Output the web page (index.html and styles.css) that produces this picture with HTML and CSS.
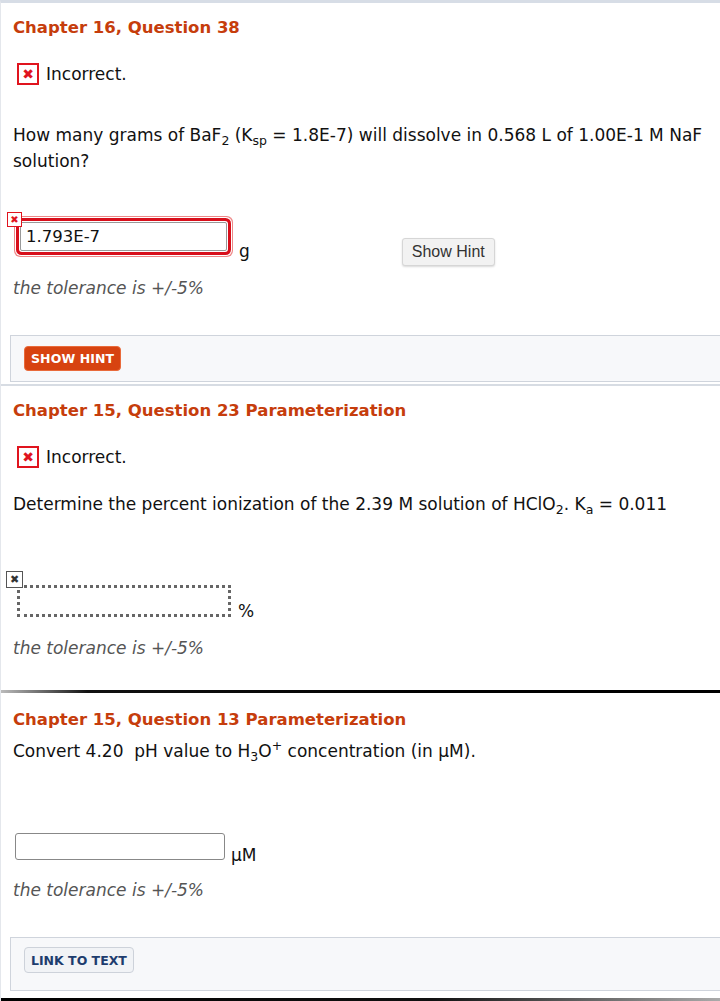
FILE: index.html
```html
<!DOCTYPE html>
<html>
<head>
<meta charset="utf-8">
<link rel="stylesheet" href="styles.css">
</head>
<body>
<div class="page">
  <section class="q q1">
    <h2 class="title">Chapter 16, Question 38</h2>
    <div class="status"><span class="xbox">&#x2716;</span>Incorrect.</div>
    <p class="text">How many grams of BaF<sub>2</sub> (K<sub>sp</sub> = 1.8E-7) will dissolve in 0.568 L of 1.00E-1 M NaF solution?</p>
    <div class="answer-row">
      <div class="field wrong">
        <span class="mark red">&#x2716;</span>
        <div class="input red-input">1.793E-7</div>
      </div>
      <span class="unit">g</span>
      <button class="native-btn">Show Hint</button>
    </div>
    <p class="tol">the tolerance is +/-5%</p>
    <div class="toolbar"><button class="hint-btn">SHOW HINT</button></div>
  </section>
  <div class="sep light"></div>
  <section class="q q2">
    <h2 class="title">Chapter 15, Question 23 Parameterization</h2>
    <div class="status"><span class="xbox">&#x2716;</span>Incorrect.</div>
    <p class="text">Determine the percent ionization of the 2.39 M solution of HClO<sub>2</sub>. K<sub>a</sub> = 0.011</p>
    <div class="answer-row r2">
      <div class="field">
        <span class="mark grey">&#x2716;</span>
        <div class="input dotted"></div>
      </div>
      <span class="unit">%</span>
    </div>
    <p class="tol">the tolerance is +/-5%</p>
  </section>
  <div class="sep dark"></div>
  <section class="q q3">
    <h2 class="title">Chapter 15, Question 13 Parameterization</h2>
    <p class="text t3">Convert 4.20&nbsp; pH value to H<sub>3</sub>O<sup>+</sup> concentration (in μM).</p>
    <div class="answer-row r3">
      <div class="input plain"></div>
      <span class="unit">μM</span>
    </div>
    <p class="tol">the tolerance is +/-5%</p>
    <div class="toolbar tb3"><button class="link-btn">LINK TO TEXT</button></div>
  </section>
  <div class="sep dark bottom"></div>
</div>
</body>
</html>
```
FILE: styles.css
```css
html, body {
  margin: 0;
  padding: 0;
  background: #fff;
}
body {
  font-family: "DejaVu Sans", Verdana, sans-serif;
  font-size: 17px;
  color: #111;
  width: 720px;
  overflow: hidden;
}
.page {
  border-top: 3px solid #d7dde6;
  border-left: 1px solid #e4e7ec;
}
.q {
  padding-left: 12px;
}
.title {
  margin: 0;
  font-size: 16.5px;
  font-weight: bold;
  color: #c63d0c;
  line-height: 20px;
}
.q1 .title { padding-top: 15px; }
.status {
  display: flex;
  align-items: center;
  margin-top: 25px;
  padding-left: 4px;
  line-height: 22px;
}
.xbox {
  display: inline-flex;
  width: 18px;
  height: 18px;
  border: 2px solid #e0141e;
  color: #e0141e;
  font-size: 14px;
  align-items: center;
  justify-content: center;
  margin-right: 7px;
  box-sizing: content-box;
}
.text {
  margin: 37px 0 0 0;
  line-height: 26px;
  padding-right: 6px;
}
sub, sup {
  font-size: 12.5px;
  line-height: 0;
}
sub { vertical-align: -4px; }
sup { vertical-align: 7px; }
.answer-row {
  display: flex;
  align-items: flex-end;
  margin-top: 44px;
}
.field {
  position: relative;
  margin-left: -5px;
}
.mark {
  position: absolute;
  left: -1px;
  top: -6px;
  width: 13px;
  height: 13px;
  font-size: 10px;
  display: flex;
  align-items: center;
  justify-content: center;
  background: #fff;
  z-index: 2;
}
.mark.red {
  border: 1px solid #e0141e;
  color: #e0141e;
}
.mark.grey {
  border: 1px solid #555;
  color: #333;
  top: -10px;
  left: -2px;
  width: 15px;
  height: 15px;
  font-size: 11px;
}
.input {
  box-sizing: border-box;
  width: 212px;
  height: 31px;
  background: #fff;
}
.red-input {
  margin: 4px 0 0 12px;
  border: 1px solid #999;
  box-shadow: 0 0 0 1px #fff, 0 0 0 4px #d80f1b, 0 0 0 5px #fff, 0 0 0 6px #e88;
  border-radius: 2px;
  padding: 4px 0 0 5px;
  font-size: 16.5px;
  line-height: 20px;
  height: 29px;
  width: 207px;
}
.unit {
  margin-left: 12px;
  line-height: 18px;
  margin-bottom: -9px;
}
.native-btn {
  margin-left: 152px;
  margin-bottom: -15px;
  font-family: "Liberation Sans", Arial, sans-serif;
  font-size: 16px;
  color: #333;
  background: #f2f2f2;
  border: 1px solid #d6d6d6;
  border-radius: 3px;
  box-shadow: 0 1px 2px rgba(0,0,0,0.15);
  padding: 0 9px;
  height: 28px;
}
.tol {
  margin: 27px 0 0 0;
  font-style: italic;
  color: #555;
  line-height: 20px;
}
.toolbar {
  margin: 37px 0 0 -3px;
  background: #f7f8fa;
  border: 1px solid #cfd4dc;
  border-right: none;
  height: 45px;
  display: flex;
  align-items: center;
  padding-left: 13px;
}
.hint-btn {
  font-family: "DejaVu Sans", Verdana, sans-serif;
  font-weight: bold;
  font-size: 12.5px;
  color: #fff;
  background: #d74310;
  border: 1px solid #e96a3a;
  border-radius: 4px;
  height: 25px;
  padding: 0 6px;
  letter-spacing: 0.1px;
}
.sep {
  height: 2px;
}
.sep.light {
  background: #d7dce3;
  margin-top: 2px;
}
.q2 .title { padding-top: 15px; }
.q2 .status { margin-top: 25px; }
.q2 .text { margin-top: 23px; }
.r2 { margin-top: 64px; }
.dotted {
  margin: 4px 0 0 9px;
  border: 3px dotted #666;
  width: 214px;
  height: 32px;
}
.r2 .unit { margin-left: 7px; margin-bottom: -4px; line-height: 20px; }
.q2 .tol { margin-top: 21px; }
.sep.dark {
  margin-top: 32px;
  height: 3px;
  background: linear-gradient(to right, #bbb 0%, #111 12%, #000 60%, #000 100%);
}
.q3 .title { padding-top: 17px; }
.t3 { margin-top: 8px; }
.r3 { margin-top: 69px; }
.plain {
  margin-left: 2px;
  width: 210px;
  height: 27px;
  border: 1px solid #888;
  border-radius: 3px;
}
.r3 .unit { margin-left: 6px; line-height: 20px; margin-bottom: -5px; }
.q3 .tol { margin-top: 20px; }
.tb3 {
  margin-top: 37px;
  height: 43px;
  align-items: flex-start;
  padding-top: 9px;
}
.link-btn {
  font-family: "DejaVu Sans", Verdana, sans-serif;
  font-weight: bold;
  font-size: 12.5px;
  color: #1d3c6e;
  background: #f1f3f6;
  border: 1px solid #cdd2da;
  border-radius: 4px;
  height: 26px;
  padding: 0 6px;
}
.sep.bottom {
  margin-top: 7px;
  background: linear-gradient(to right, #000 0%, #111 60%, #aaa 100%);
}
```
